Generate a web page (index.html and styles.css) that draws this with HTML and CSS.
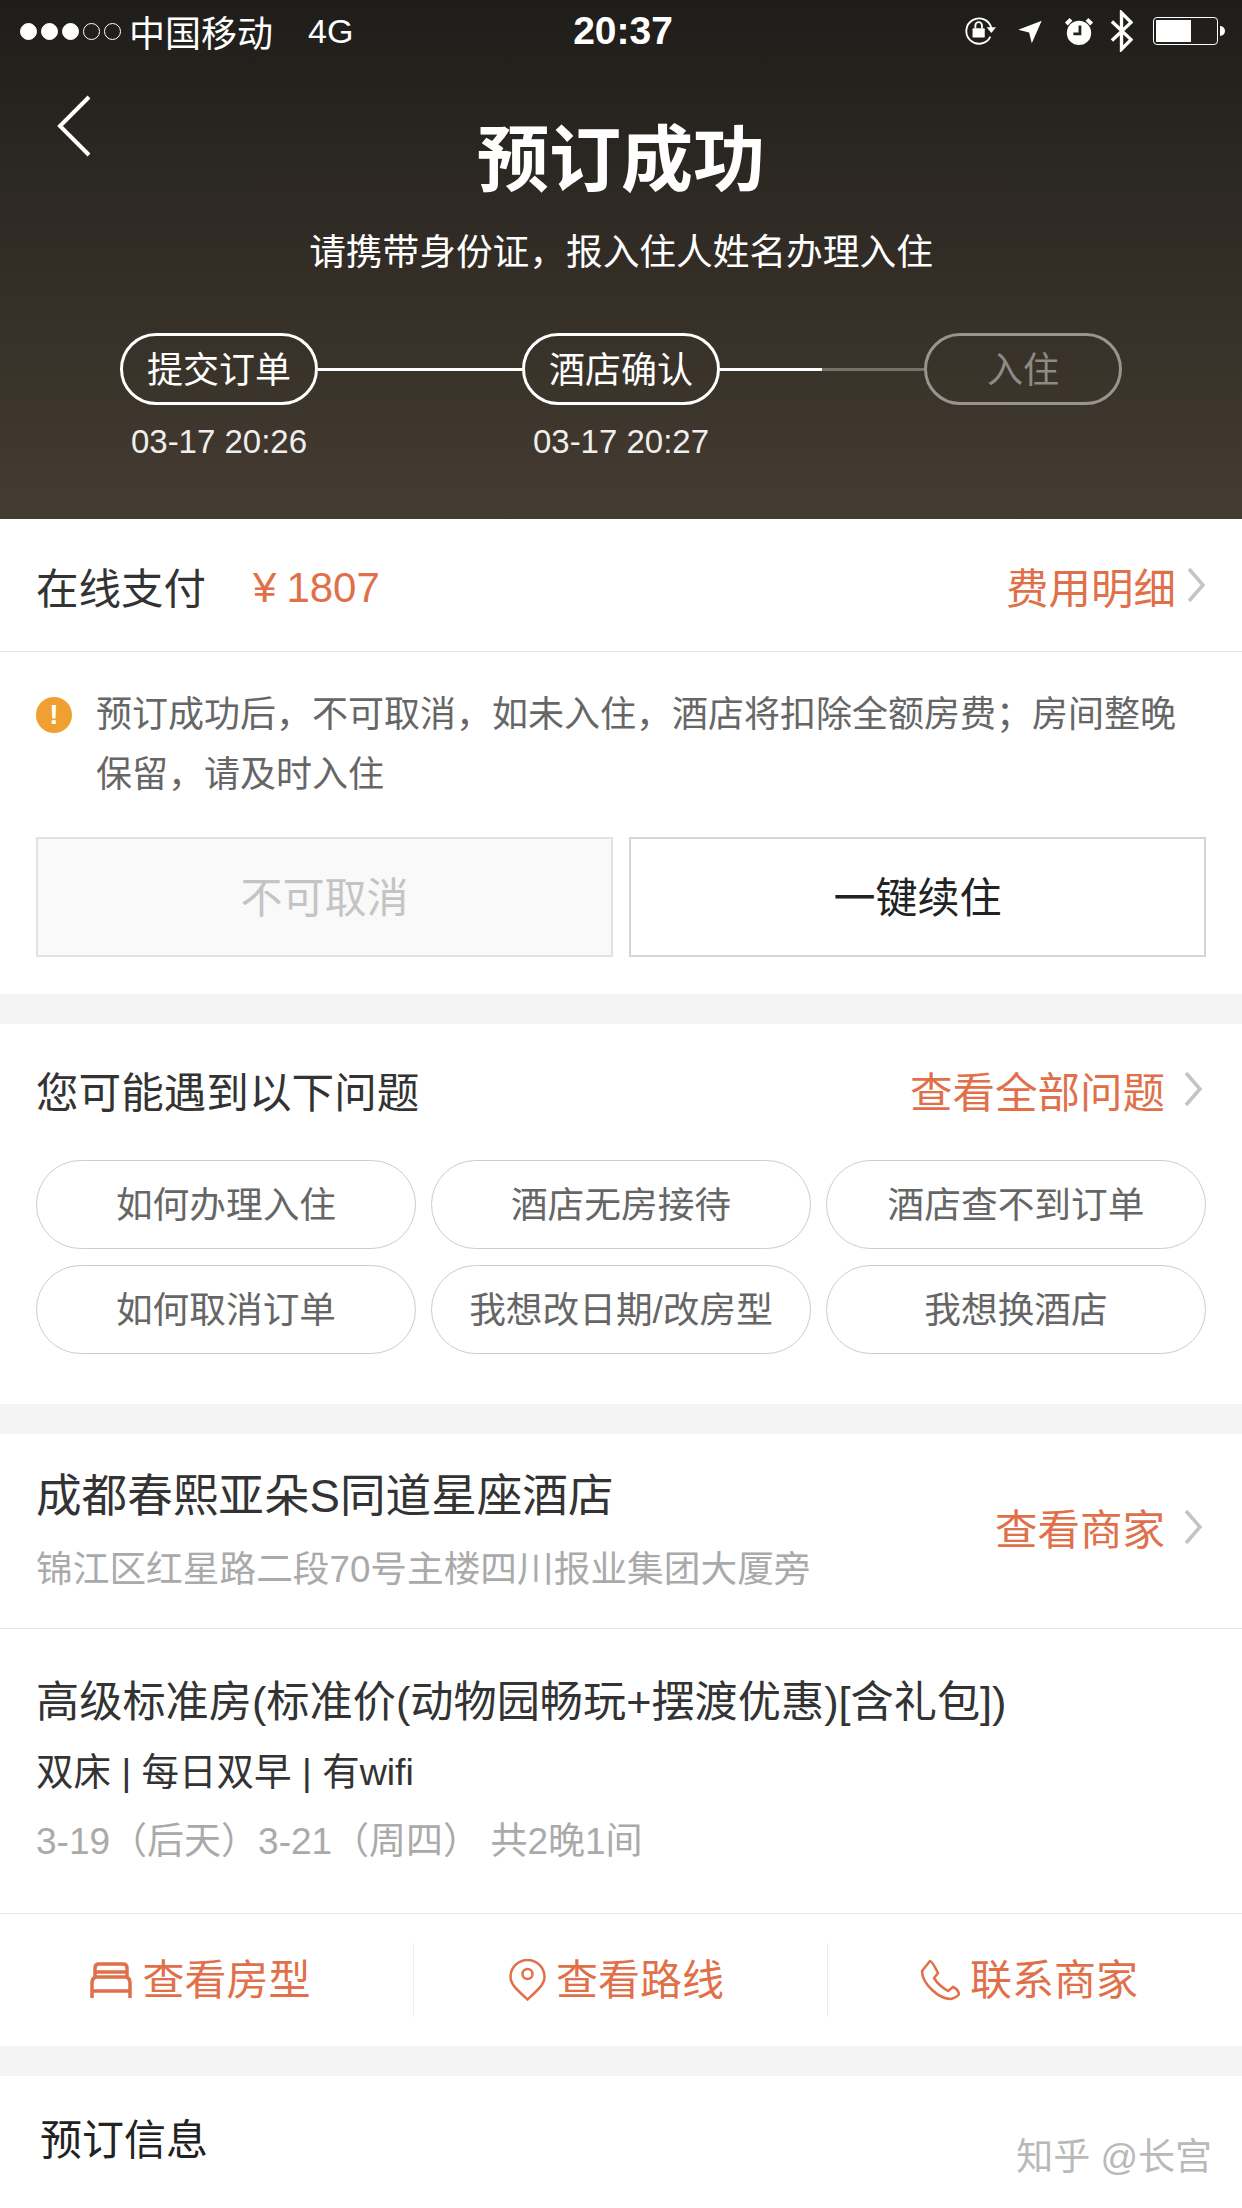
FILE: index.html
```html
<!DOCTYPE html>
<html lang="zh-CN">

<head>
    <meta charset="UTF-8">
    <meta name="viewport" content="width=device-width, initial-scale=1.0">
    <title>预订成功</title>
    <link rel="stylesheet" href="styles.css">
</head>

<body>
    <header class="head">
        <div class="status">
            <div class="status-left">
                <span class="dot"></span><span class="dot"></span><span class="dot"></span>
                <span class="dot off"></span><span class="dot off"></span>
                <span class="carrier">中国移动</span>
                <span class="net">4G</span>
            </div>
            <div class="clock">20:37</div>
            <div class="status-right">
                <svg width="34" height="30" viewBox="0 0 36 32">
                    <path d="M28 22a13.500 13.500 0 1 1 1-9" fill="none" stroke="#fff" stroke-width="2" />
                    <path d="M24 12h10l-5 6z" fill="#fff" />
                    <rect x="9" y="13" width="13" height="10" rx="1" fill="#fff" />
                    <path d="M12 13v-3a3.500 3.500 0 0 1 7 0v3" fill="none" stroke="#fff" stroke-width="2" />
                </svg>
                <svg class="ico-loc" width="26" height="27" viewBox="0 0 28 30">
                    <path d="M27 3L16 28l-3-12L1 13z" fill="#fff" />
                </svg>
                <svg class="ico-alarm" width="32" height="30" viewBox="0 0 32 32">
                    <circle cx="16" cy="18" r="13" fill="#fff" />
                    <path d="M17 10v9h-7" fill="none" stroke="#26231f" stroke-width="3" />
                    <path d="M1 7l5-5 3 3-5 5zM31 7l-5-5-3 3 5 5z" fill="#fff" />
                </svg>
                <svg class="ico-bt" width="23" height="42" viewBox="0 0 24 42">
                    <path d="M2 11l20 19-10 10V2l10 10L2 31" fill="none" stroke="#fff" stroke-width="3.500" />
                </svg>
                <div class="battery"><div class="battery-fill"></div></div>
                <div class="battery-tip"></div>
            </div>
        </div>

        <svg class="back" width="36" height="62" viewBox="0 0 36 62">
            <path d="M33 2L4 31l29 29" fill="none" stroke="#fff" stroke-width="4" />
        </svg>
        <h1 class="title">预订成功</h1>
        <p class="sub">请携带身份证，报入住人姓名办理入住</p>

        <div class="steps">
            <div class="step">
                <div class="pill">提交订单</div>
                <div class="time">03-17 20:26</div>
            </div>
            <div class="link"></div>
            <div class="step">
                <div class="pill">酒店确认</div>
                <div class="time">03-17 20:27</div>
            </div>
            <div class="link half"></div>
            <div class="step todo">
                <div class="pill">入住</div>
                <div class="time"></div>
            </div>
        </div>
    </header>

    <section class="pay">
        <span class="pay-label">在线支付</span>
        <span class="price"><span class="yen">¥</span>1807</span>
        <a class="more fee">费用明细
            <svg class="chev" width="20" height="36" viewBox="0 0 20 36">
                <path d="M3 2l14 16L3 34" fill="none" stroke="#c4c4c4" stroke-width="3.500" />
            </svg>
        </a>
    </section>

    <section class="block notice-block">
        <div class="notice">
            <span class="warn">!</span>
            <p>预订成功后，不可取消，如未入住，酒店将扣除全额房费；房间整晚保留，请及时入住</p>
        </div>
        <div class="btns">
            <div class="btn disabled">不可取消</div>
            <div class="btn">一键续住</div>
        </div>
    </section>

    <section class="block faq">
        <div class="faq-head">
            <span class="faq-title">您可能遇到以下问题</span>
            <a class="more">查看全部问题
                <svg class="chev wide" width="20" height="36" viewBox="0 0 20 36">
                    <path d="M3 2l14 16L3 34" fill="none" stroke="#c4c4c4" stroke-width="3.500" />
                </svg>
            </a>
        </div>
        <div class="faq-grid">
            <div class="q">如何办理入住</div>
            <div class="q">酒店无房接待</div>
            <div class="q">酒店查不到订单</div>
            <div class="q">如何取消订单</div>
            <div class="q">我想改日期/改房型</div>
            <div class="q">我想换酒店</div>
        </div>
    </section>

    <section class="block order">
        <div class="hotel">
            <div>
                <div class="hotel-name">成都春熙亚朵S同道星座酒店</div>
                <div class="hotel-addr">锦江区红星路二段70号主楼四川报业集团大厦旁</div>
            </div>
            <a class="more">查看商家
                <svg class="chev wide" width="20" height="36" viewBox="0 0 20 36">
                    <path d="M3 2l14 16L3 34" fill="none" stroke="#c4c4c4" stroke-width="3.500" />
                </svg>
            </a>
        </div>
        <div class="room">
            <div class="room-name">高级标准房(标准价(动物园畅玩+摆渡优惠)[含礼包])</div>
            <div class="room-spec">双床 | 每日双早 | 有wifi</div>
            <div class="room-date">3-19（后天）3-21（周四） 共2晚1间</div>
        </div>
        <div class="actions">
            <a class="action">
                <svg width="42" height="37" viewBox="0 0 42 37">
                    <path d="M5 15V6q0-4 4-4h24q4 0 4 4v9M6 10h30M2 36V21q0-5 4-6h30q4 1 4 6v15M2 29h38" fill="none" stroke="#e0704a" stroke-width="3.500" />
                </svg>
                <span>查看房型</span>
            </a>
            <a class="action route">
                <svg width="37" height="42" viewBox="0 0 37 42">
                    <path d="M18.500 40.500C7 30 1.500 25 1.500 18a17 17 0 0 1 34 0c0 7-5.500 12-17 22.500z" fill="none" stroke="#e0704a" stroke-width="2.500" />
                    <circle cx="18.500" cy="15" r="5" fill="none" stroke="#e0704a" stroke-width="2.500" />
                </svg>
                <span>查看路线</span>
            </a>
            <a class="action">
                <svg width="40" height="42" viewBox="0 0 40 42">
                    <path d="M2 12L10 2q2 0 8 12l-4 5q5 8 14 13l5-4q5 2 6 7-1 3-8 5C18 40 2 24 2 12z" fill="none" stroke="#e0704a" stroke-width="2.500" />
                </svg>
                <span>联系商家</span>
            </a>
        </div>
    </section>

    <section class="block booking">预订信息</section>
    <div class="mark">知乎 @长宫</div>
</body>

</html>
```

FILE: styles.css
```css
* {
    box-sizing: border-box;
    margin: 0;
    padding: 0;
}

html,
body {
    height: 2208px;
    overflow: hidden;
}

body {
    position: relative;
    background-color: #f4f4f4;
    font-family: "Liberation Sans", "Noto Sans CJK SC", sans-serif;
    color: #333333;
}

/* header */
.head {
    position: relative;
    height: 519px;
    padding-top: 10px;
    background: linear-gradient(#1f1d1a, #453c31);
    color: #ffffff;
}

.status {
    display: flex;
    align-items: center;
    justify-content: space-between;
    height: 42px;
    padding: 0 17px 0 20px;
}

.status-left {
    display: flex;
    align-items: center;
    width: 440px;
}

.dot {
    width: 17px;
    height: 17px;
    margin-right: 4px;
    border: 1px solid #ffffff;
    border-radius: 50%;
    background-color: #ffffff;
}

.dot.off {
    background-color: transparent;
}

.carrier {
    margin-left: 4px;
    font-size: 36px;
}

.net {
    margin-left: 35px;
    font-size: 34px;
}

.clock {
    font-size: 39px;
    font-weight: bold;
    margin-left: 1px;
}

.status-right {
    display: flex;
    align-items: center;
    justify-content: flex-end;
    width: 440px;
}

.ico-loc {
    margin-left: 19px;
}

.ico-alarm {
    margin-left: 20px;
}

.ico-bt {
    margin-left: 15px;
}

.battery {
    width: 65px;
    height: 28px;
    margin-left: 20px;
    padding: 2px;
    border: 1px solid #ffffff;
    border-radius: 4px;
}

.battery-fill {
    width: 35px;
    height: 100%;
    background-color: #ffffff;
}

.battery-tip {
    width: 5px;
    height: 10px;
    margin-left: 2px;
    border-radius: 0 5px 5px 0;
    background-color: #ffffff;
}

.back {
    position: absolute;
    top: 95px;
    left: 56px;
}

.title {
    margin-top: 73px;
    font-size: 72px;
    font-weight: bold;
    line-height: 70px;
    text-align: center;
}

.sub {
    margin-top: 33px;
    font-size: 36.700px;
    line-height: 50px;
    text-align: center;
}

.steps {
    display: flex;
    margin-top: 55px;
    padding: 0 120px;
}

.step {
    width: 198px;
}

.pill {
    height: 72px;
    border: 3px solid #ffffff;
    border-radius: 36px;
    font-size: 36px;
    line-height: 69px;
    text-align: center;
}

.time {
    margin-top: 19px;
    font-size: 33px;
    line-height: 36px;
    text-align: center;
    color: #f0efee;
    white-space: nowrap;
}

.link {
    flex: 1;
    height: 3px;
    margin-top: 35px;
    background-color: #ffffff;
}

.link.half {
    background: linear-gradient(90deg, #ffffff 50%, #77716a 50%);
}

.step.todo .pill {
    border-color: #98948f;
    color: #8e8a85;
}

/* pay */
.pay {
    display: flex;
    align-items: center;
    height: 133px;
    padding: 0 36px;
    border-bottom: 1px solid #e8e8e8;
    background-color: #ffffff;
    font-size: 42px;
}

.pay-label {
    font-size: 42.500px;
}

.price {
    margin-left: 47px;
    padding-top: 5px;
    color: #e0704a;
}

.yen {
    margin-right: 10px;
}

.more {
    display: flex;
    align-items: center;
    font-size: 42.500px;
    color: #e0704a;
}

.fee {
    margin-left: auto;
}

.chev {
    margin-left: 10px;
}

.chev.wide {
    margin-left: 18px;
    margin-right: 3px;
}

/* blocks */
.block {
    margin-bottom: 30px;
    background-color: #ffffff;
}

.notice-block {
    height: 342px;
    padding: 33px 36px 0;
}

.notice {
    display: flex;
}

.warn {
    flex: none;
    width: 36px;
    height: 36px;
    margin: 12px 24px 0 0;
    border-radius: 50%;
    background-color: #f0a030;
    color: #ffffff;
    font-size: 28px;
    font-weight: bold;
    line-height: 36px;
    text-align: center;
}

.notice p {
    font-size: 36px;
    line-height: 60px;
    color: #666666;
}

.btns {
    display: grid;
    grid-template-columns: 577px 577px;
    gap: 16px;
    margin-top: 32px;
}

.btn {
    height: 120px;
    border: 2px solid #d5d5d5;
    font-size: 42px;
    line-height: 119px;
    text-align: center;
    color: #222222;
}

.btn.disabled {
    border-color: #e2e2e2;
    background-color: #f9f9f9;
    color: #c4c4c4;
}

/* faq */
.faq {
    height: 380px;
    padding: 0 36px;
}

.faq-head {
    display: flex;
    align-items: center;
    justify-content: space-between;
    height: 130px;
    margin-bottom: 6px;
}

.faq-title {
    font-size: 42.600px;
}

.faq-grid {
    display: grid;
    grid-template-columns: repeat(3, 1fr);
    gap: 16px 15px;
}

.q {
    height: 89px;
    border: 1.500px solid #cdcdcd;
    border-radius: 45px;
    font-size: 36.700px;
    line-height: 89px;
    text-align: center;
    color: #666666;
}

/* order */
.hotel {
    display: flex;
    align-items: center;
    justify-content: space-between;
    height: 195px;
    padding: 0 36px 1px;
    border-bottom: 1px solid #e8e8e8;
}

.hotel .more {
    margin-bottom: 8px;
}

.hotel-name {
    font-size: 45.600px;
    line-height: 60px;
}

.hotel-addr {
    margin-top: 19px;
    font-size: 36.700px;
    line-height: 48px;
    color: #aaaaaa;
}

.room {
    height: 285px;
    padding: 43px 36px 0;
    border-bottom: 1px solid #e8e8e8;
}

.room-name {
    font-size: 43.200px;
    line-height: 60px;
}

.room-spec {
    margin-top: 15px;
    font-size: 37.500px;
    line-height: 50px;
}

.room-date {
    margin-top: 20px;
    font-size: 37px;
    line-height: 50px;
    color: #aaaaaa;
}

.actions {
    display: grid;
    grid-template-columns: 413px 414px 1fr;
    align-items: center;
    height: 132px;
}

.action {
    display: flex;
    align-items: center;
    justify-content: center;
    gap: 10px;
    height: 74px;
    padding-right: 12px;
    border-left: 1px solid #ececec;
    font-size: 42px;
    color: #e0704a;
}

.action:first-child {
    border-left: 0;
}

.action.route {
    padding-right: 8px;
}

.action span {
    margin-bottom: 8px;
}

.booking {
    height: 133px;
    margin-bottom: 0;
    padding: 35px 40px 0;
    font-size: 42px;
    line-height: 60px;
    color: #222222;
}

/* watermark over the page */
.mark {
    position: absolute;
    right: 30px;
    bottom: 27px;
    font-size: 37px;
    color: #b9b9b9;
}
```
